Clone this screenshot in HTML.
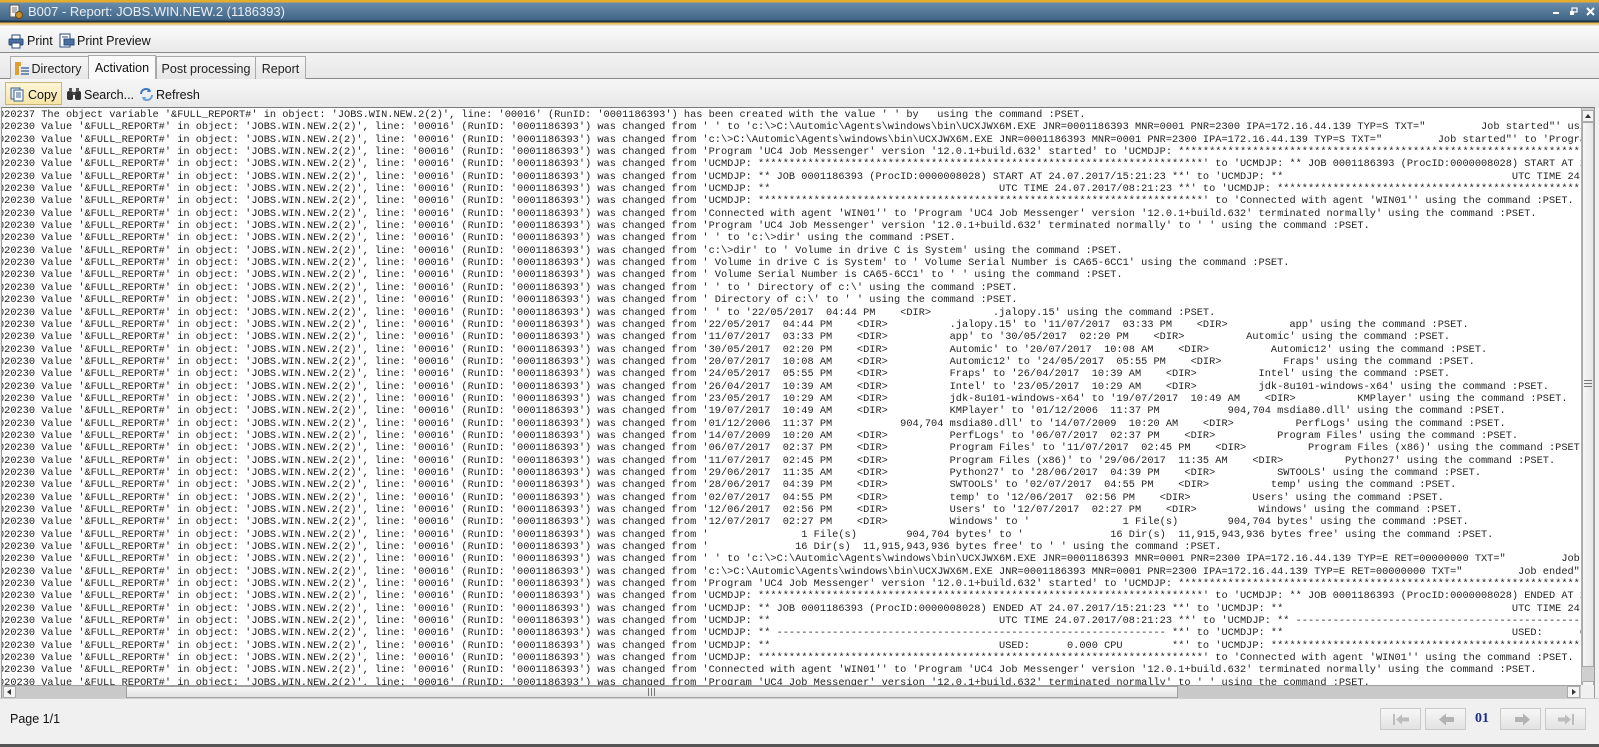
<!DOCTYPE html>
<html><head><meta charset="utf-8">
<style>
*{margin:0;padding:0;box-sizing:border-box}
body{width:1599px;height:747px;overflow:hidden;background:#f0f0f0;font-family:"Liberation Sans",sans-serif;position:relative}
.abs{position:absolute}
#title{left:0;top:0;width:1599px;height:26px;background:linear-gradient(#e5ad2c 0,#e5ad2c 2px,#6a8cab 3px,#3f6485 20px,#1e3347 21px,#1e3347 22px,#f0b848 23px,#e8d8b0 25px,#f4f4f4 26px)}
#title .t{left:28px;top:4px;color:#e8eef4;font-size:13px}
.bar{left:0;width:1599px;background:linear-gradient(#fbfbfb,#e9e9e9);border-bottom:1px solid #8a8a8a}
.lbl{font-size:12.5px;color:#111}
.tab{top:56px;height:23px;border:1px solid #a9a9a9;border-bottom:none;background:linear-gradient(#f6f6f6,#e6e6e6);font-size:12.5px;color:#222;padding:5px 0 0 0;text-align:center}
#txt{left:1px;top:107px;width:1594px;height:591px;background:#fff;border-top:1px solid #7a7a7a;border-left:1px solid #9a9a9a;border-right:1px solid #9a9a9a;overflow:hidden}
#txt pre{position:absolute;left:-4px;top:1px;font-family:"Liberation Mono",monospace;font-size:10.3px;line-height:12.35px;color:#222;white-space:pre}
.btn{top:708px;width:41px;height:22px;border:1px solid #c9c9c9;background:linear-gradient(#f7f7f7,#e3e3e3)}
</style></head><body>

<div id="title" class="abs">
  <svg class="abs" style="left:8px;top:4px" width="16" height="16" viewBox="0 0 16 16"><rect x="2" y="1" width="9" height="12" fill="#f4f4f4" stroke="#555"/><path d="M4 4h5M4 6h5M4 8h4" stroke="#777"/><circle cx="11" cy="11" r="3.5" fill="#c89030" stroke="#6a4a10"/></svg>
  <div class="abs t">B007 - Report: JOBS.WIN.NEW.2 (1186393)</div>
  <div class="abs" style="left:1553px;top:12px;width:6px;height:2px;background:#fff"></div>
  <svg class="abs" style="left:1569px;top:7px" width="9" height="9"><rect x="3" y="1" width="5" height="4" fill="none" stroke="#fff" stroke-width="1.2"/><rect x="1" y="4" width="4" height="4" fill="#fff"/></svg>
  <svg class="abs" style="left:1586px;top:7px" width="9" height="9"><path d="M1 1L8 8M8 1L1 8" stroke="#fff" stroke-width="2"/></svg>
</div>

<div class="abs bar" style="top:26px;height:27px">
  <svg class="abs" style="left:8px;top:8px" width="16" height="15" viewBox="0 0 16 15"><rect x="4" y="1" width="8" height="4" fill="#fff" stroke="#2a4a7a"/><rect x="1" y="5" width="14" height="6" rx="1" fill="#4a6fa0" stroke="#2a4a7a"/><rect x="4" y="9" width="8" height="5" fill="#fff" stroke="#2a4a7a"/></svg>
  <div class="abs lbl" style="left:27px;top:8px">Print</div>
  <svg class="abs" style="left:59px;top:7px" width="16" height="16" viewBox="0 0 16 16"><rect x="1" y="1" width="10" height="13" fill="#fff" stroke="#2a4a7a"/><rect x="5" y="6" width="10" height="6" fill="#4a6fa0" stroke="#2a4a7a"/><path d="M3 4h6" stroke="#2a4a7a"/></svg>
  <div class="abs lbl" style="left:77px;top:8px">Print Preview</div>
</div>

<div class="abs bar" style="top:53px;height:26px;background:linear-gradient(#f2f2f2,#e8e8e8)"></div>
<div class="abs tab" style="left:10px;width:79px;padding-left:14px">Directory</div>
<svg class="abs" style="left:15px;top:62px" width="15" height="13" viewBox="0 0 15 13"><rect x="0" y="0" width="6" height="4" fill="#e0a030"/><rect x="0" y="4" width="4" height="9" fill="#e0a030"/><path d="M6 6h8M6 9h8M6 12h8" stroke="#4a6fa0" stroke-width="1.5"/></svg>
<div class="abs tab" style="left:88px;top:55px;width:68px;height:25px;background:#fafafa;color:#111">Activation</div>
<div class="abs tab" style="left:156px;width:100px">Post processing</div>
<div class="abs tab" style="left:255px;width:51px">Report</div>

<div class="abs bar" style="top:79px;height:29px;border-bottom:none;background:linear-gradient(#f6f6f6,#e8e8e8)">
  <div class="abs" style="left:5px;top:3px;width:57px;height:23px;border:1px solid #c9b577;background:linear-gradient(#fff6d6,#f6e4a8)"></div>
  <svg class="abs" style="left:10px;top:8px" width="15" height="15" viewBox="0 0 15 15"><rect x="1" y="1" width="9" height="11" fill="#dfe8f4" stroke="#3a5f90"/><rect x="4" y="3" width="9" height="11" fill="#fff" stroke="#3a5f90"/><path d="M6 6h5M6 8h5M6 10h5" stroke="#3a5f90"/></svg>
  <div class="abs lbl" style="left:28px;top:9px">Copy</div>
  <svg class="abs" style="left:66px;top:8px" width="16" height="14" viewBox="0 0 16 14"><rect x="1" y="4" width="6" height="9" rx="2" fill="#333"/><rect x="9" y="4" width="6" height="9" rx="2" fill="#333"/><rect x="3" y="1" width="3" height="4" fill="#555"/><rect x="10" y="1" width="3" height="4" fill="#555"/><rect x="6" y="5" width="4" height="3" fill="#444"/></svg>
  <div class="abs lbl" style="left:84px;top:9px">Search...</div>
  <svg class="abs" style="left:139px;top:8px" width="15" height="15" viewBox="0 0 15 15"><path d="M2 7a5 5 0 0 1 9-3" fill="none" stroke="#3a78c0" stroke-width="2"/><path d="M10 1l2 4-4 0z" fill="#3a78c0"/><path d="M13 8a5 5 0 0 1-9 3" fill="none" stroke="#6aa0d8" stroke-width="2"/><path d="M5 14l-2-4 4 0z" fill="#6aa0d8"/></svg>
  <div class="abs lbl" style="left:156px;top:9px">Refresh</div>
</div>

<div id="txt" class="abs"><pre>020237 The object variable '&amp;FULL_REPORT#' in object: 'JOBS.WIN.NEW.2(2)', line: '00016' (RunID: '0001186393') has been created with the value ' ' by   using the command :PSET.
020230 Value '&amp;FULL_REPORT#' in object: 'JOBS.WIN.NEW.2(2)', line: '00016' (RunID: '0001186393') was changed from ' ' to 'c:\&gt;C:\Automic\Agents\windows\bin\UCXJWX6M.EXE JNR=0001186393 MNR=0001 PNR=2300 IPA=172.16.44.139 TYP=S TXT="         Job started"' using the command :PSET.
020230 Value '&amp;FULL_REPORT#' in object: 'JOBS.WIN.NEW.2(2)', line: '00016' (RunID: '0001186393') was changed from 'c:\&gt;C:\Automic\Agents\windows\bin\UCXJWX6M.EXE JNR=0001186393 MNR=0001 PNR=2300 IPA=172.16.44.139 TYP=S TXT="         Job started"' to 'Program 'UC4 Job Messenger' version '12.0.1+build.632' started' using the command :PSET.
020230 Value '&amp;FULL_REPORT#' in object: 'JOBS.WIN.NEW.2(2)', line: '00016' (RunID: '0001186393') was changed from 'Program 'UC4 Job Messenger' version '12.0.1+build.632' started' to 'UCMDJP: ************************************************************************' using the command :PSET.
020230 Value '&amp;FULL_REPORT#' in object: 'JOBS.WIN.NEW.2(2)', line: '00016' (RunID: '0001186393') was changed from 'UCMDJP: ************************************************************************' to 'UCMDJP: ** JOB 0001186393 (ProcID:0000008028) START AT 24.07.2017/15:21:23 **' using the command :PSET.
020230 Value '&amp;FULL_REPORT#' in object: 'JOBS.WIN.NEW.2(2)', line: '00016' (RunID: '0001186393') was changed from 'UCMDJP: ** JOB 0001186393 (ProcID:0000008028) START AT 24.07.2017/15:21:23 **' to 'UCMDJP: **                                     UTC TIME 24.07.2017/08:21:23 **' using the command :PSET.
020230 Value '&amp;FULL_REPORT#' in object: 'JOBS.WIN.NEW.2(2)', line: '00016' (RunID: '0001186393') was changed from 'UCMDJP: **                                     UTC TIME 24.07.2017/08:21:23 **' to 'UCMDJP: ************************************************************************' using the command :PSET.
020230 Value '&amp;FULL_REPORT#' in object: 'JOBS.WIN.NEW.2(2)', line: '00016' (RunID: '0001186393') was changed from 'UCMDJP: ************************************************************************' to 'Connected with agent 'WIN01'' using the command :PSET.
020230 Value '&amp;FULL_REPORT#' in object: 'JOBS.WIN.NEW.2(2)', line: '00016' (RunID: '0001186393') was changed from 'Connected with agent 'WIN01'' to 'Program 'UC4 Job Messenger' version '12.0.1+build.632' terminated normally' using the command :PSET.
020230 Value '&amp;FULL_REPORT#' in object: 'JOBS.WIN.NEW.2(2)', line: '00016' (RunID: '0001186393') was changed from 'Program 'UC4 Job Messenger' version '12.0.1+build.632' terminated normally' to ' ' using the command :PSET.
020230 Value '&amp;FULL_REPORT#' in object: 'JOBS.WIN.NEW.2(2)', line: '00016' (RunID: '0001186393') was changed from ' ' to 'c:\&gt;dir' using the command :PSET.
020230 Value '&amp;FULL_REPORT#' in object: 'JOBS.WIN.NEW.2(2)', line: '00016' (RunID: '0001186393') was changed from 'c:\&gt;dir' to ' Volume in drive C is System' using the command :PSET.
020230 Value '&amp;FULL_REPORT#' in object: 'JOBS.WIN.NEW.2(2)', line: '00016' (RunID: '0001186393') was changed from ' Volume in drive C is System' to ' Volume Serial Number is CA65-6CC1' using the command :PSET.
020230 Value '&amp;FULL_REPORT#' in object: 'JOBS.WIN.NEW.2(2)', line: '00016' (RunID: '0001186393') was changed from ' Volume Serial Number is CA65-6CC1' to ' ' using the command :PSET.
020230 Value '&amp;FULL_REPORT#' in object: 'JOBS.WIN.NEW.2(2)', line: '00016' (RunID: '0001186393') was changed from ' ' to ' Directory of c:\' using the command :PSET.
020230 Value '&amp;FULL_REPORT#' in object: 'JOBS.WIN.NEW.2(2)', line: '00016' (RunID: '0001186393') was changed from ' Directory of c:\' to ' ' using the command :PSET.
020230 Value '&amp;FULL_REPORT#' in object: 'JOBS.WIN.NEW.2(2)', line: '00016' (RunID: '0001186393') was changed from ' ' to '22/05/2017  04:44 PM    &lt;DIR&gt;          .jalopy.15' using the command :PSET.
020230 Value '&amp;FULL_REPORT#' in object: 'JOBS.WIN.NEW.2(2)', line: '00016' (RunID: '0001186393') was changed from '22/05/2017  04:44 PM    &lt;DIR&gt;          .jalopy.15' to '11/07/2017  03:33 PM    &lt;DIR&gt;          app' using the command :PSET.
020230 Value '&amp;FULL_REPORT#' in object: 'JOBS.WIN.NEW.2(2)', line: '00016' (RunID: '0001186393') was changed from '11/07/2017  03:33 PM    &lt;DIR&gt;          app' to '30/05/2017  02:20 PM    &lt;DIR&gt;          Automic' using the command :PSET.
020230 Value '&amp;FULL_REPORT#' in object: 'JOBS.WIN.NEW.2(2)', line: '00016' (RunID: '0001186393') was changed from '30/05/2017  02:20 PM    &lt;DIR&gt;          Automic' to '20/07/2017  10:08 AM    &lt;DIR&gt;          Automic12' using the command :PSET.
020230 Value '&amp;FULL_REPORT#' in object: 'JOBS.WIN.NEW.2(2)', line: '00016' (RunID: '0001186393') was changed from '20/07/2017  10:08 AM    &lt;DIR&gt;          Automic12' to '24/05/2017  05:55 PM    &lt;DIR&gt;          Fraps' using the command :PSET.
020230 Value '&amp;FULL_REPORT#' in object: 'JOBS.WIN.NEW.2(2)', line: '00016' (RunID: '0001186393') was changed from '24/05/2017  05:55 PM    &lt;DIR&gt;          Fraps' to '26/04/2017  10:39 AM    &lt;DIR&gt;          Intel' using the command :PSET.
020230 Value '&amp;FULL_REPORT#' in object: 'JOBS.WIN.NEW.2(2)', line: '00016' (RunID: '0001186393') was changed from '26/04/2017  10:39 AM    &lt;DIR&gt;          Intel' to '23/05/2017  10:29 AM    &lt;DIR&gt;          jdk-8u101-windows-x64' using the command :PSET.
020230 Value '&amp;FULL_REPORT#' in object: 'JOBS.WIN.NEW.2(2)', line: '00016' (RunID: '0001186393') was changed from '23/05/2017  10:29 AM    &lt;DIR&gt;          jdk-8u101-windows-x64' to '19/07/2017  10:49 AM    &lt;DIR&gt;          KMPlayer' using the command :PSET.
020230 Value '&amp;FULL_REPORT#' in object: 'JOBS.WIN.NEW.2(2)', line: '00016' (RunID: '0001186393') was changed from '19/07/2017  10:49 AM    &lt;DIR&gt;          KMPlayer' to '01/12/2006  11:37 PM           904,704 msdia80.dll' using the command :PSET.
020230 Value '&amp;FULL_REPORT#' in object: 'JOBS.WIN.NEW.2(2)', line: '00016' (RunID: '0001186393') was changed from '01/12/2006  11:37 PM           904,704 msdia80.dll' to '14/07/2009  10:20 AM    &lt;DIR&gt;          PerfLogs' using the command :PSET.
020230 Value '&amp;FULL_REPORT#' in object: 'JOBS.WIN.NEW.2(2)', line: '00016' (RunID: '0001186393') was changed from '14/07/2009  10:20 AM    &lt;DIR&gt;          PerfLogs' to '06/07/2017  02:37 PM    &lt;DIR&gt;          Program Files' using the command :PSET.
020230 Value '&amp;FULL_REPORT#' in object: 'JOBS.WIN.NEW.2(2)', line: '00016' (RunID: '0001186393') was changed from '06/07/2017  02:37 PM    &lt;DIR&gt;          Program Files' to '11/07/2017  02:45 PM    &lt;DIR&gt;          Program Files (x86)' using the command :PSET.
020230 Value '&amp;FULL_REPORT#' in object: 'JOBS.WIN.NEW.2(2)', line: '00016' (RunID: '0001186393') was changed from '11/07/2017  02:45 PM    &lt;DIR&gt;          Program Files (x86)' to '29/06/2017  11:35 AM    &lt;DIR&gt;          Python27' using the command :PSET.
020230 Value '&amp;FULL_REPORT#' in object: 'JOBS.WIN.NEW.2(2)', line: '00016' (RunID: '0001186393') was changed from '29/06/2017  11:35 AM    &lt;DIR&gt;          Python27' to '28/06/2017  04:39 PM    &lt;DIR&gt;          SWTOOLS' using the command :PSET.
020230 Value '&amp;FULL_REPORT#' in object: 'JOBS.WIN.NEW.2(2)', line: '00016' (RunID: '0001186393') was changed from '28/06/2017  04:39 PM    &lt;DIR&gt;          SWTOOLS' to '02/07/2017  04:55 PM    &lt;DIR&gt;          temp' using the command :PSET.
020230 Value '&amp;FULL_REPORT#' in object: 'JOBS.WIN.NEW.2(2)', line: '00016' (RunID: '0001186393') was changed from '02/07/2017  04:55 PM    &lt;DIR&gt;          temp' to '12/06/2017  02:56 PM    &lt;DIR&gt;          Users' using the command :PSET.
020230 Value '&amp;FULL_REPORT#' in object: 'JOBS.WIN.NEW.2(2)', line: '00016' (RunID: '0001186393') was changed from '12/06/2017  02:56 PM    &lt;DIR&gt;          Users' to '12/07/2017  02:27 PM    &lt;DIR&gt;          Windows' using the command :PSET.
020230 Value '&amp;FULL_REPORT#' in object: 'JOBS.WIN.NEW.2(2)', line: '00016' (RunID: '0001186393') was changed from '12/07/2017  02:27 PM    &lt;DIR&gt;          Windows' to '               1 File(s)        904,704 bytes' using the command :PSET.
020230 Value '&amp;FULL_REPORT#' in object: 'JOBS.WIN.NEW.2(2)', line: '00016' (RunID: '0001186393') was changed from '               1 File(s)        904,704 bytes' to '              16 Dir(s)  11,915,943,936 bytes free' using the command :PSET.
020230 Value '&amp;FULL_REPORT#' in object: 'JOBS.WIN.NEW.2(2)', line: '00016' (RunID: '0001186393') was changed from '              16 Dir(s)  11,915,943,936 bytes free' to ' ' using the command :PSET.
020230 Value '&amp;FULL_REPORT#' in object: 'JOBS.WIN.NEW.2(2)', line: '00016' (RunID: '0001186393') was changed from ' ' to 'c:\&gt;C:\Automic\Agents\windows\bin\UCXJWX6M.EXE JNR=0001186393 MNR=0001 PNR=2300 IPA=172.16.44.139 TYP=E RET=00000000 TXT="         Job ended"' using the command :PSET.
020230 Value '&amp;FULL_REPORT#' in object: 'JOBS.WIN.NEW.2(2)', line: '00016' (RunID: '0001186393') was changed from 'c:\&gt;C:\Automic\Agents\windows\bin\UCXJWX6M.EXE JNR=0001186393 MNR=0001 PNR=2300 IPA=172.16.44.139 TYP=E RET=00000000 TXT="         Job ended"' to 'Program 'UC4 Job Messenger' version '12.0.1+build.632' started' using the command :PSET.
020230 Value '&amp;FULL_REPORT#' in object: 'JOBS.WIN.NEW.2(2)', line: '00016' (RunID: '0001186393') was changed from 'Program 'UC4 Job Messenger' version '12.0.1+build.632' started' to 'UCMDJP: ************************************************************************' using the command :PSET.
020230 Value '&amp;FULL_REPORT#' in object: 'JOBS.WIN.NEW.2(2)', line: '00016' (RunID: '0001186393') was changed from 'UCMDJP: ************************************************************************' to 'UCMDJP: ** JOB 0001186393 (ProcID:0000008028) ENDED AT 24.07.2017/15:21:23 **' using the command :PSET.
020230 Value '&amp;FULL_REPORT#' in object: 'JOBS.WIN.NEW.2(2)', line: '00016' (RunID: '0001186393') was changed from 'UCMDJP: ** JOB 0001186393 (ProcID:0000008028) ENDED AT 24.07.2017/15:21:23 **' to 'UCMDJP: **                                     UTC TIME 24.07.2017/08:21:23 **' using the command :PSET.
020230 Value '&amp;FULL_REPORT#' in object: 'JOBS.WIN.NEW.2(2)', line: '00016' (RunID: '0001186393') was changed from 'UCMDJP: **                                     UTC TIME 24.07.2017/08:21:23 **' to 'UCMDJP: ** --------------------------------------------------------------- **' using the command :PSET.
020230 Value '&amp;FULL_REPORT#' in object: 'JOBS.WIN.NEW.2(2)', line: '00016' (RunID: '0001186393') was changed from 'UCMDJP: ** --------------------------------------------------------------- **' to 'UCMDJP: **                                     USED:      0.000 CPU        **' using the command :PSET.
020230 Value '&amp;FULL_REPORT#' in object: 'JOBS.WIN.NEW.2(2)', line: '00016' (RunID: '0001186393') was changed from 'UCMDJP: **                                     USED:      0.000 CPU        **' to 'UCMDJP: ************************************************************************' using the command :PSET.
020230 Value '&amp;FULL_REPORT#' in object: 'JOBS.WIN.NEW.2(2)', line: '00016' (RunID: '0001186393') was changed from 'UCMDJP: ************************************************************************' to 'Connected with agent 'WIN01'' using the command :PSET.
020230 Value '&amp;FULL_REPORT#' in object: 'JOBS.WIN.NEW.2(2)', line: '00016' (RunID: '0001186393') was changed from 'Connected with agent 'WIN01'' to 'Program 'UC4 Job Messenger' version '12.0.1+build.632' terminated normally' using the command :PSET.
020230 Value '&amp;FULL_REPORT#' in object: 'JOBS.WIN.NEW.2(2)', line: '00016' (RunID: '0001186393') was changed from 'Program 'UC4 Job Messenger' version '12.0.1+build.632' terminated normally' to ' ' using the command :PSET.</pre>
  <div class="abs" style="left:1579px;top:0;width:13px;height:590px;background:#cfcfcf;border-left:1px solid #b0b0b0"></div>
  <div class="abs" style="left:1580px;top:2px;width:12px;height:12px;background:#f4f4f4;border:1px solid #aaa"></div>
  <svg class="abs" style="left:1582px;top:5px" width="8" height="6"><path d="M1 5L4 1L7 5z" fill="#333"/></svg>
  <div class="abs" style="left:1580px;top:14px;width:12px;height:545px;background:linear-gradient(90deg,#f6f6f6,#e6e6e6);border:1px solid #a8a8a8"></div>
  <div class="abs" style="left:1582px;top:272px;width:8px;height:7px;border-top:1px solid #777;border-bottom:1px solid #777"><div style="margin-top:2px;height:1px;background:#777"></div></div>
  <div class="abs" style="left:1580px;top:573px;width:12px;height:12px;background:#f4f4f4;border:1px solid #aaa"></div>
  <svg class="abs" style="left:1582px;top:576px" width="8" height="6"><path d="M1 1L4 5L7 1z" fill="#333"/></svg>
  <div class="abs" style="left:0;top:577px;width:1579px;height:13px;background:#c9c9c9;border-top:1px solid #a0a0a0"></div>
  <div class="abs" style="left:1px;top:578px;width:13px;height:12px;background:#f4f4f4;border:1px solid #aaa"></div>
  <svg class="abs" style="left:4px;top:580px" width="6" height="8"><path d="M5 1L1 4L5 7z" fill="#333"/></svg>
  <div class="abs" style="left:124px;top:578px;width:1052px;height:12px;background:linear-gradient(#f6f6f6,#e4e4e4);border:1px solid #a0a0a0"></div>
  <div class="abs" style="left:646px;top:580px;width:7px;height:8px;border-left:1px solid #777;border-right:1px solid #777"><div style="margin-left:2px;width:1px;height:8px;background:#777"></div></div>
  <div class="abs" style="left:1565px;top:578px;width:13px;height:12px;background:#f4f4f4;border:1px solid #aaa"></div>
  <svg class="abs" style="left:1569px;top:580px" width="6" height="8"><path d="M1 1L5 4L1 7z" fill="#333"/></svg>
  <div class="abs" style="left:1579px;top:577px;width:13px;height:13px;background:#f0f0f0"></div>
</div>

<div class="abs" style="left:0;top:698px;width:1599px;height:47px;background:#f0f0f0;border-top:1px solid #d0d0d0"></div>
<div class="abs" style="left:10px;top:712px;font-size:12.5px;color:#111">Page 1/1</div>
<div class="abs btn" style="left:1380px"><svg class="abs" style="left:11px;top:4px" width="18" height="13"><rect x="1" y="1" width="2" height="11" fill="#bdbdbd"/><path d="M4 6.5L10 1.5V4.5H17V8.5H10V11.5z" fill="#bdbdbd"/></svg></div>
<div class="abs btn" style="left:1425px"><svg class="abs" style="left:12px;top:4px" width="18" height="13"><path d="M1 6.5L8 0.5V4H16V9H8V12.5z" fill="#b3b3b3"/></svg></div>
<div class="abs" style="left:1475px;top:711px;font-size:14px;font-weight:bold;color:#1e2e90;font-family:'Liberation Serif',serif">01</div>
<div class="abs btn" style="left:1500px"><svg class="abs" style="left:12px;top:4px" width="18" height="13"><path d="M17 6.5L10 0.5V4H2V9H10V12.5z" fill="#b3b3b3"/></svg></div>
<div class="abs btn" style="left:1545px"><svg class="abs" style="left:11px;top:4px" width="18" height="13"><rect x="15" y="1" width="2" height="11" fill="#bdbdbd"/><path d="M14 6.5L8 1.5V4.5H1V8.5H8V11.5z" fill="#bdbdbd"/></svg></div>
<div class="abs" style="left:0;top:744px;width:1599px;height:3px;background:#555"></div>
</body></html>
